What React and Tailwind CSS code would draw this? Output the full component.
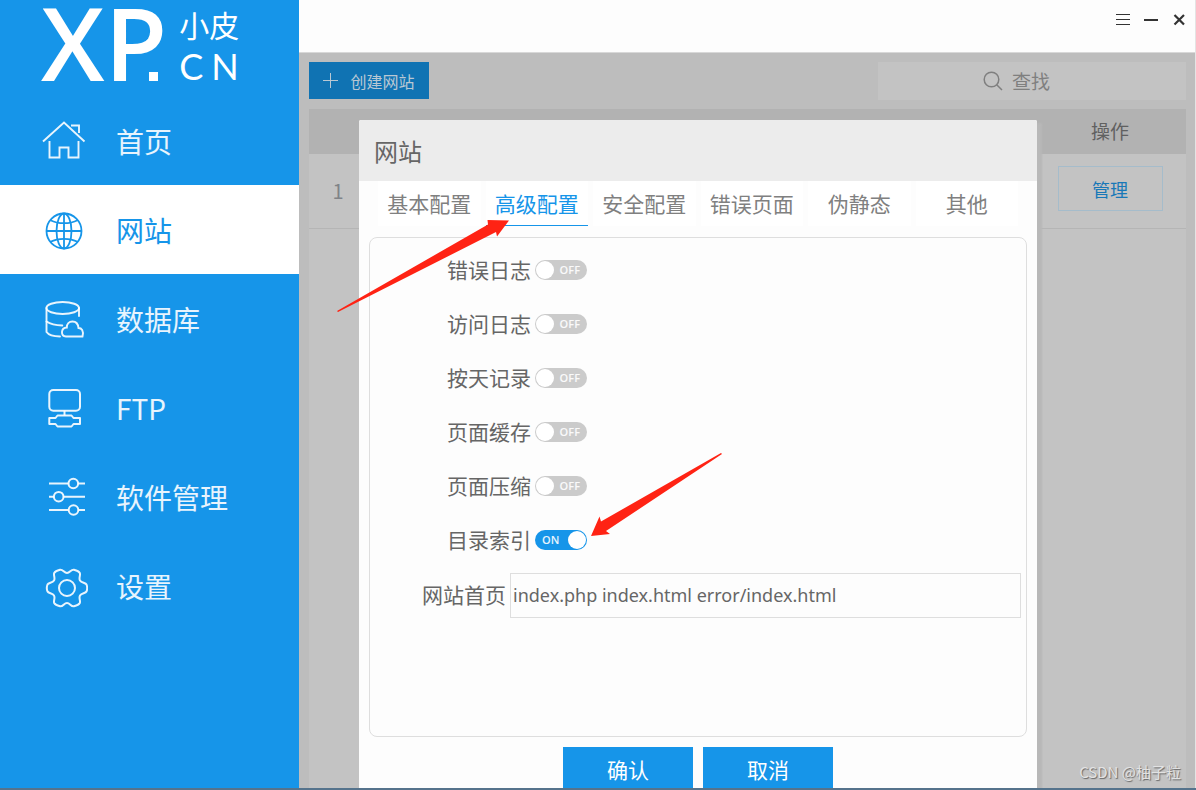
import React, { useState } from 'react';

const HomeIcon = () => (
  <svg width="46" height="46" viewBox="0 0 46 46" fill="none" stroke="currentColor" strokeWidth="1.9">
    <path d="M1 23.500 22 4.500 42.500 23.500" />
    <path d="M29 7.500H37V15" />
    <path d="M7.500 23V39.500H17.500V29.500H26.500V39.500H36.500V23" />
  </svg>
);

const GlobeIcon = () => (
  <svg width="46" height="46" viewBox="0 0 46 46" fill="none" stroke="currentColor" strokeWidth="1.8">
    <circle cx="22" cy="24" r="17.500" />
    <ellipse cx="22" cy="24" rx="7.500" ry="17.500" />
    <path d="M22 6.500V41.500M4.500 24H39.500" />
    <path d="M8.500 13.200C16 17.200 28 17.200 35.500 13.200M8.500 34.800C16 30.800 28 30.800 35.500 34.800" />
  </svg>
);

const DatabaseIcon = () => (
  <svg width="46" height="46" viewBox="0 0 46 46" fill="none" stroke="currentColor" strokeWidth="1.900" strokeLinecap="round">
    <ellipse cx="20.700" cy="12" rx="16.300" ry="6" />
    <path d="M4.500 12V36C7 39.500 12 40.500 18 40.500" />
    <path d="M4.500 25.500C9 28.500 14 29.300 20.300 29.500" />
    <path d="M37 12V20" />
    <path d="M24 40.500H40.500C42 34.500 39.500 32 36.500 32C36 27 33.500 25.500 30.500 25.500C27 25.500 24.800 28 24.800 31.500C18.500 32 18.500 40 24 40.500Z" />
  </svg>
);

const FtpIcon = () => (
  <svg width="46" height="46" viewBox="0 0 46 46" fill="none" stroke="currentColor" strokeWidth="2" strokeLinejoin="round">
    <rect x="7.300" y="5" width="30.700" height="20.700" rx="4" />
    <path d="M22.500 25.700V30.500" />
    <path d="M15.500 30.500H29.500L31.500 33H38V39H31.500L29.500 41.500H15.500L13.500 39H7.300V33H13.500Z" />
  </svg>
);

const SlidersIcon = () => (
  <svg width="46" height="46" viewBox="0 0 46 46" fill="none" stroke="currentColor" strokeWidth="2">
    <path d="M7 9.500H26.500M36.100 9.500H43M7 22.700H11.900M21.500 22.700H43M7 36H26.700M36.300 36H43" />
    <circle cx="31.300" cy="9.500" r="4.800" />
    <circle cx="16.700" cy="22.700" r="4.800" />
    <circle cx="31.500" cy="36" r="4.800" />
  </svg>
);

const GearIcon = () => (
  <svg width="46" height="46" viewBox="-25 -25 46 46" fill="none" stroke="currentColor" strokeWidth="2" strokeLinejoin="round">
    <circle r="8" />
    <path d="M0-15C3-15 4-19 7-18.300C9-17.800 12-16.500 12.800-15C13.800-13 11.500-10 13-7.500C14.500-5 18.500-5.500 19.500-3.500C20.300-1.500 20.300 1.500 19.500 3.500C18.500 5.500 14.500 5 13 7.500C11.500 10 13.800 13 12.800 15C12 16.500 9 17.800 7 18.300C4 19 3 15 0 15C-3 15-4 19-7 18.300C-9 17.800-12 16.500-12.800 15C-13.800 13-11.500 10-13 7.500C-14.500 5-18.500 5.500-19.500 3.500C-20.300 1.500-20.300-1.500-19.500-3.500C-18.500-5.500-14.500-5-13-7.500C-11.500-10-13.800-13-12.800-15C-12-16.500-9-17.800-7-18.300C-4-19-3-15 0-15Z" />
  </svg>
);

const NAV_ITEMS = [
  { label: '首页', icon: HomeIcon },
  { label: '网站', icon: GlobeIcon },
  { label: '数据库', icon: DatabaseIcon },
  { label: 'FTP', icon: FtpIcon },
  { label: '软件管理', icon: SlidersIcon },
  { label: '设置', icon: GearIcon },
];

const TABS = ['基本配置', '高级配置', '安全配置', '错误页面', '伪静态', '其他'];

const OPTIONS = ['错误日志', '访问日志', '按天记录', '页面缓存', '页面压缩', '目录索引'];

const Logo = () => (
  <div className="flex h-24 items-start pl-[41px] text-white">
    <div className="relative font-['Open_Sans'] text-[102px] font-semibold leading-[84px]">
      XP
      {/* square dot tucked under the bowl of the P */}
      <span className="absolute bottom-[3px] right-[9px] size-[9px] bg-white"></span>
    </div>
    <div className="ml-3 flex flex-col pt-[6px]">
      <span className="text-[30px] leading-9">小皮</span>
      <span className="flex gap-2 font-['Lato'] text-4xl leading-[48px]">
        <span>C</span>
        <span>N</span>
      </span>
    </div>
  </div>
);

const Sidebar = () => (
  <aside className="w-1/4 shrink-0 bg-[#1695e9]">
    <Logo />
    <nav>
      {NAV_ITEMS.map(({ label, icon: Icon }) => (
        <a
          key={label}
          href="#"
          className={`flex h-[89px] items-center gap-7 pl-[42px] text-[28px] ${
            label === '网站' ? 'bg-white text-[#1695e9]' : 'text-white/90'
          }`}
        >
          <Icon />
          <span>{label}</span>
        </a>
      ))}
    </nav>
  </aside>
);

const TitleBar = () => (
  <header className="flex h-[53px] shrink-0 items-start justify-end gap-3 border-b border-[#d8d8d8] bg-[#fdfdfd] pr-2 pt-[11px] text-[#333]">
    <button aria-label="菜单">
      <svg width="16" height="16" viewBox="0 0 16 16" stroke="currentColor">
        <path d="M1 3.500H15M1 8.500H15M1 13.500H15" />
      </svg>
    </button>
    <button aria-label="最小化">
      <svg width="16" height="16" viewBox="0 0 16 16" stroke="currentColor" strokeWidth="2">
        <path d="M1 9H15" />
      </svg>
    </button>
    <button aria-label="关闭">
      <svg width="16" height="16" viewBox="0 0 16 16" stroke="currentColor" strokeWidth="2.200">
        <path d="M3.500 4 13 13.500M13 4 3.500 13.500" />
      </svg>
    </button>
  </header>
);

const SiteList = () => (
  <div className="flex flex-1 flex-col bg-[#bdbdbd] pl-[10px] pr-[9px] pt-[9px]">
    <div className="flex justify-between">
      <button className="flex h-[37px] w-[120px] items-center justify-center gap-3 bg-[#1073b3] text-base text-[#b9c8d3]">
        <svg width="15" height="15" viewBox="0 0 15 15" stroke="currentColor">
          <path d="M7.500 0V15M0 7.500H15" />
        </svg>
        <span>创建网站</span>
      </button>
      <label className="flex h-[38px] w-[308px] items-center justify-center gap-[9px] bg-[#c3c3c3] text-[#7f7f7f]">
        <svg width="20" height="20" viewBox="0 0 20 20" fill="none" stroke="currentColor" strokeWidth="1.500">
          <circle cx="8.500" cy="8.500" r="7.300" />
          <path d="M13.700 13.700 19 19" />
        </svg>
        <input placeholder="查找" aria-label="查找" className="w-[69px] text-[19px] placeholder:text-[#7f7f7f]" />
      </label>
    </div>
    <div className="mt-[9px] flex-1 bg-[#c3c3c3]">
      <table className="w-full table-fixed">
        <thead>
          <tr className="h-[45px] bg-[#b2b2b2] text-[19px] text-[#606060]">
            <th className="w-[58px]"></th>
            <th></th>
            <th className="w-[152px] font-normal">操作</th>
          </tr>
        </thead>
        <tbody>
          <tr className="h-[74px] border-b border-[#b5b5b5]">
            <td className="text-center text-xl text-[#808388]">1</td>
            <td></td>
            <td className="pt-3 text-center align-top">
              <button className="h-[45px] w-[105px] border border-[#a5bccb] text-lg text-[#1878b8]">管理</button>
            </td>
          </tr>
        </tbody>
      </table>
    </div>
  </div>
);

const Switch = ({ label, checked, onChange }) => (
  <label className="flex h-[54px] items-center gap-1">
    <span className="w-[161px] text-right">{label}</span>
    <input type="checkbox" role="switch" checked={checked} onChange={onChange} className="peer sr-only" />
    <span
      className={`flex h-5 w-[52px] items-center justify-between rounded-full px-px font-['Open_Sans'] text-[11px] font-semibold text-white/90 ${
        checked ? 'flex-row-reverse bg-[#1695e9]' : 'bg-[#cbcbcb]'
      }`}
    >
      <span className="size-[18px] rounded-full bg-white"></span>
      <span className="px-[6px]">{checked ? 'ON' : 'OFF'}</span>
    </span>
  </label>
);

const SiteDialog = () => {
  const [activeTab, setActiveTab] = useState('高级配置');
  const [enabled, setEnabled] = useState({ 目录索引: true });
  const [indexFiles, setIndexFiles] = useState('index.php index.html error/index.html');

  const toggle = (name) => setEnabled((prev) => ({ ...prev, [name]: !prev[name] }));

  return (
    <div
      role="dialog"
      aria-label="网站"
      className="absolute bottom-0 left-[60px] right-[158px] top-[120px] flex flex-col overflow-hidden rounded-t-xs bg-[#fdfdfd] shadow-[5px_3px_2px_#b8b8b8]"
    >
      <h2 className="flex h-[61px] shrink-0 items-center bg-[#ececec] pl-[15px] text-2xl text-[#666]">网站</h2>

      <div className="grid grid-cols-6 gap-[5px] px-[19px]">
        {TABS.map((tab) => (
          <button
            key={tab}
            onClick={() => setActiveTab(tab)}
            className={`h-[45px] whitespace-nowrap border-b bg-white pt-[2px] text-[21px] ${
              tab === activeTab ? 'border-[#1695e9] text-[#1695e9]' : 'border-white text-[#808080]'
            }`}
          >
            {tab}
          </button>
        ))}
      </div>

      <form className="mx-[10px] mt-[11px] flex-1 rounded-lg border border-[#dedede] pt-[5px] text-[21px] text-[#666]">
        {OPTIONS.map((name) => (
          <Switch key={name} label={name} checked={!!enabled[name]} onChange={() => toggle(name)} />
        ))}
        <div className="flex h-[56px] items-center gap-1 pr-[5px]">
          <label htmlFor="index-files" className="w-[136px] text-right">网站首页</label>
          <input
            id="index-files"
            value={indexFiles}
            onChange={(e) => setIndexFiles(e.target.value)}
            className="h-[45px] flex-1 border border-[#dedede] px-[2px] font-['Noto_Sans'] text-lg"
          />
        </div>
      </form>

      <div className="mt-[10px] flex shrink-0 justify-center gap-[10px] text-[21px] text-white">
        <button className="h-[41px] w-[130px] bg-[#1695e9] pt-1">确认</button>
        <button className="h-[41px] w-[130px] bg-[#1695e9] pt-1">取消</button>
      </div>
    </div>
  );
};

// Red pointers drawn over the dialog
const Pointers = () => (
  <>
    <svg className="pointer-events-none absolute left-[36px] top-[216px]" width="176" height="98" viewBox="335 216 176 98" fill="#ff2314">
      <path d="M337 311 488 224.500 487.500 220 509 220.500 497 236.500 496 232 338 312Z" />
    </svg>
    <svg className="pointer-events-none absolute left-[289px] top-[450px]" width="136" height="90" viewBox="588 450 136 90" fill="#ff2314">
      <path d="M721 453 601 521.500 599.500 516.500 591 536 610 534 606 531 722 454Z" />
    </svg>
  </>
);

export default function App() {
  return (
    <div className="flex h-screen overflow-hidden border-b-2 border-[#55738c] font-['Noto_Sans_CJK_SC',sans-serif]">
      <Sidebar />
      <main className="relative flex min-w-0 flex-1 flex-col border-r border-[#e4e4e4]">
        <TitleBar />
        <SiteList />
        <SiteDialog />
        <Pointers />
        <p className="absolute bottom-[5px] right-[14px] text-[15px] text-[#e2e2e2] [text-shadow:1px_1px_1px_#666]">
          CSDN @柚子粒
        </p>
      </main>
    </div>
  );
}
